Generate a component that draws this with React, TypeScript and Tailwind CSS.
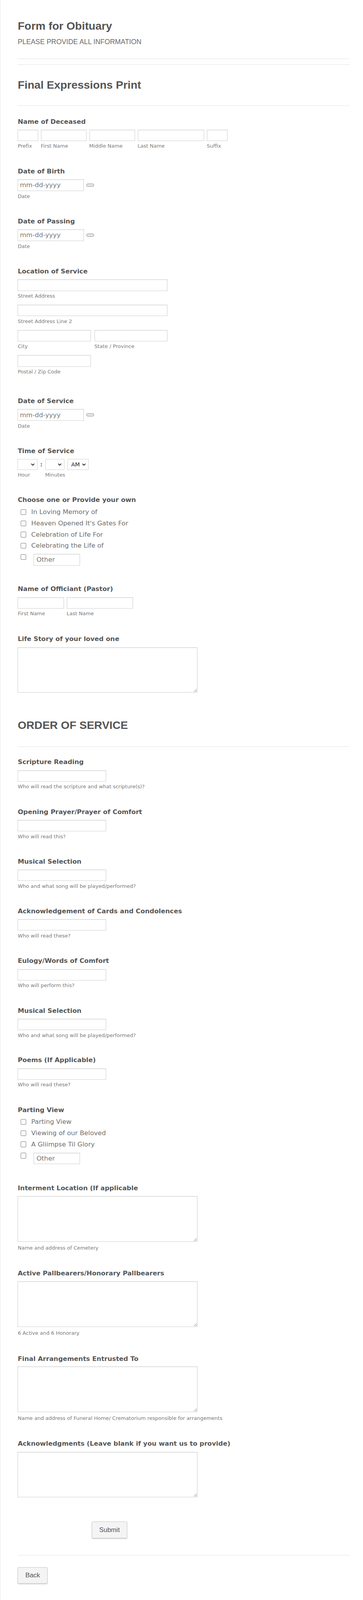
import type { ReactNode } from 'react';

const HEAD = "font-['Liberation_Sans',Arial,sans-serif] font-bold text-[28.44px] leading-[33.78px] text-[#555]";
const LABEL = "font-['DejaVu_Sans',Verdana,sans-serif] font-bold text-[16.6px] leading-[19.56px] text-[#555]";
const SUB = "font-['DejaVu_Sans',Verdana,sans-serif] text-[13px] leading-[16px] text-[#7b7b7b] whitespace-nowrap";
const FIELD = "block h-[29.33px] border border-[#cfcfcf] bg-white shadow-[inset_0_1px_2px_rgba(0,0,0,0.08)] outline-none";
const AREA = "block border border-[#cfcfcf] bg-white shadow-[inset_0_1px_2px_rgba(0,0,0,0.08)] outline-none";
const BTN =
  "block rounded-[3px] border border-[#c6c6c6] bg-[#f4f4f4] font-['Liberation_Sans',Arial,sans-serif] text-[16.9px] text-[#555] shadow-[0_2px_2px_rgba(0,0,0,0.15)]";

function Label({ children }: { children: ReactNode }) {
  return <div className={LABEL}>{children}</div>;
}

function Hr({ className }: { className: string }) {
  return <div className={`h-px bg-[#e2e2e2] ${className}`} />;
}

function DateField({ label, className }: { label: string; className: string }) {
  return (
    <div className={className}>
      <Label>{label}</Label>
      <div className="mt-[10.67px] flex items-center">
        <div className="flex h-[30.22px] w-[169.78px] items-center border border-[#cfcfcf] bg-white px-[4.44px] font-['DejaVu_Sans',Verdana,sans-serif] text-[16.6px] leading-[19.56px] text-[#777] shadow-[inset_0_1px_2px_rgba(0,0,0,0.08)]">
          mm-dd-yyyy
        </div>
        <span className="ml-[6.22px] h-[8px] w-[19.56px] rounded-full border border-[#8a8a8a] bg-[#e6e6e6]" />
      </div>
      <div className={`${SUB} mt-[5.33px]`}>Date</div>
    </div>
  );
}

function TextField({ label, sub, className }: { label: string; sub: string; className: string }) {
  return (
    <div className={className}>
      <Label>{label}</Label>
      <input className={`${FIELD} mt-[10.67px] w-[226.67px]`} />
      <div className={`${SUB} mt-[5.33px]`}>{sub}</div>
    </div>
  );
}

function Chevron() {
  return (
    <svg width="10" height="6.4" viewBox="0 0 11 7" className="shrink-0">
      <path d="M1.2 1.2 L5.5 5.4 L9.8 1.2" fill="none" stroke="#222" strokeWidth="2.2" />
    </svg>
  );
}

function Check() {
  return <span className="block h-[14.22px] w-[14.22px] shrink-0 rounded-[2px] border border-[#777] bg-white" />;
}

function Options({ items }: { items: string[] }) {
  return (
    <div className="pl-[7.11px]">
      {items.map((t) => (
        <div key={t} className="flex h-[28.71px] items-center">
          <Check />
          <span className="ml-[13.33px] font-['DejaVu_Sans',Verdana,sans-serif] text-[16.6px] leading-[19.56px] text-[#707070]">
            {t}
          </span>
        </div>
      ))}
      <div className="flex items-start">
        <span className="mt-[7.38px]">
          <Check />
        </span>
        <div className="ml-[19.56px] mt-[6.76px] flex h-[29.33px] w-[119.11px] items-center border border-[#cfcfcf] bg-white px-[6.22px] font-['DejaVu_Sans',Verdana,sans-serif] text-[16.6px] leading-[19.56px] text-[#777] shadow-[inset_0_1px_2px_rgba(0,0,0,0.08)]">
          Other
        </div>
      </div>
    </div>
  );
}

function AreaField({
  label,
  sub,
  className,
  areaClass,
}: {
  label: string;
  sub?: string;
  className: string;
  areaClass: string;
}) {
  return (
    <div className={className}>
      <Label>{label}</Label>
      <textarea className={`${AREA} w-[460.44px] ${areaClass}`} />
      {sub && <div className={`${SUB} mt-[8.3px]`}>{sub}</div>}
    </div>
  );
}

export default function App() {
  return (
    <div className="min-h-screen border-l border-[#e3e3e3] bg-white">
      <div className="pb-[24px] pl-[44.44px] pr-[34.67px] pt-[49.78px]">
        {/* header */}
        <h1 className={HEAD}>Form for Obituary</h1>
        <div className="mt-[13.33px] font-['Liberation_Sans',Arial,sans-serif] text-[17.78px] leading-[21.33px] text-[#6a6a6a]">
          PLEASE PROVIDE ALL INFORMATION
        </div>
        <Hr className="mt-[32px]" />
        <Hr className="mt-[14.22px]" />
        <h2 className={`${HEAD} mt-[34.67px]`}>Final Expressions Print</h2>
        <Hr className="mt-[35px]" />

        {/* Name of Deceased */}
        <div className="mt-[30.67px]">
          <Label>Name of Deceased</Label>
          <div className="mt-[10.67px] flex gap-[6.67px]">
            {[
              ['Prefix', 'w-[52.44px]'],
              ['First Name', 'w-[117.33px]'],
              ['Middle Name', 'w-[117.33px]'],
              ['Last Name', 'w-[170.67px]'],
              ['Suffix', 'w-[53.33px]'],
            ].map(([s, w]) => (
              <div key={s} className={w}>
                <input className={`${FIELD} w-full`} />
                <div className={`${SUB} mt-[5.33px]`}>{s}</div>
              </div>
            ))}
          </div>
        </div>

        <DateField label="Date of Birth" className="mt-[46.49px]" />
        <DateField label="Date of Passing" className="mt-[46.22px]" />

        {/* Location of Service */}
        <div className="mt-[46.58px]">
          <Label>Location of Service</Label>
          <div className="mt-[10.67px] w-[384px]">
            <input className={`${FIELD} w-full`} />
            <div className={`${SUB} mt-[5.33px]`}>Street Address</div>
            <input className={`${FIELD} mt-[13.96px] w-full`} />
            <div className={`${SUB} mt-[5.33px]`}>Street Address Line 2</div>
            <div className="mt-[13.96px] flex gap-[8.89px]">
              <div className="w-[187.56px]">
                <input className={`${FIELD} w-full`} />
                <div className={`${SUB} mt-[5.33px]`}>City</div>
              </div>
              <div className="w-[187.56px]">
                <input className={`${FIELD} w-full`} />
                <div className={`${SUB} mt-[5.33px]`}>State / Province</div>
              </div>
            </div>
            <div className="mt-[13.96px] w-[187.56px]">
              <input className={`${FIELD} w-full`} />
              <div className={`${SUB} mt-[5.33px]`}>Postal / Zip Code</div>
            </div>
          </div>
        </div>

        <DateField label="Date of Service" className="mt-[57.07px]" />

        {/* Time of Service */}
        <div className="mt-[46.49px]">
          <Label>Time of Service</Label>
          <div className="mt-[10.67px] flex h-[27.56px] items-center">
            <div className="flex h-[27.56px] w-[50.67px] items-center justify-end border border-[#cfcfcf] bg-white pr-[6.22px]">
              <Chevron />
            </div>
            <span className="w-[19.56px] text-center font-['DejaVu_Sans',Verdana,sans-serif] text-[14.22px] leading-[18px] font-bold text-[#666]">:</span>
            <div className="flex h-[27.56px] w-[49.78px] items-center justify-end border border-[#cfcfcf] bg-white pr-[6.22px]">
              <Chevron />
            </div>
            <div className="ml-[8px] flex h-[27.56px] w-[53.33px] items-center justify-between border border-[#cfcfcf] bg-white pl-[8px] pr-[5.33px]">
              <span className="font-['DejaVu_Sans',Verdana,sans-serif] text-[14.22px] leading-[18px] text-[#222]">AM</span>
              <Chevron />
            </div>
          </div>
          <div className="mt-[5.33px] flex">
            <div className={`${SUB} w-[70.22px]`}>Hour</div>
            <div className={SUB}>Minutes</div>
          </div>
        </div>

        {/* Choose one */}
        <div className="mt-[45.96px]">
          <Label>Choose one or Provide your own</Label>
          <div className="mt-[6.84px]">
            <Options items={['In Loving Memory of', "Heaven Opened It's Gates For", 'Celebration of Life For', 'Celebrating the Life of']} />
          </div>
        </div>

        {/* Officiant */}
        <div className="mt-[50.84px]">
          <Label>Name of Officiant (Pastor)</Label>
          <div className="mt-[10.67px] flex gap-[7.11px]">
            <div className="w-[118.22px]">
              <input className={`${FIELD} w-full`} />
              <div className={`${SUB} mt-[5.33px]`}>First Name</div>
            </div>
            <div className="w-[170.67px]">
              <input className={`${FIELD} w-full`} />
              <div className={`${SUB} mt-[5.33px]`}>Last Name</div>
            </div>
          </div>
        </div>

        <AreaField label="Life Story of your loved one" className="mt-[47.11px]" areaClass="mt-[10.67px] h-[116.8px]" />

        <h2 className={`${HEAD} mt-[67.11px]`}>ORDER OF SERVICE</h2>
        <Hr className="mt-[36.36px]" />

        <TextField label="Scripture Reading" sub="Who will read the scripture and what scripture(s)?" className="mt-[29.78px]" />
        <TextField label="Opening Prayer/Prayer of Comfort" sub="Who will read this?" className="mt-[46.49px]" />
        <TextField label="Musical Selection" sub="Who and what song will be played/performed?" className="mt-[46.22px]" />
        <TextField label="Acknowledgement of Cards and Condolences" sub="Who will read these?" className="mt-[46.22px]" />
        <TextField label="Eulogy/Words of Comfort" sub="Who will perform this?" className="mt-[46.49px]" />
        <TextField label="Musical Selection" sub="Who and what song will be played/performed?" className="mt-[46.49px]" />
        <TextField label="Poems (If Applicable)" sub="Who will read these?" className="mt-[45.96px]" />

        {/* Parting View */}
        <div className="mt-[46.49px]">
          <Label>Parting View</Label>
          <div className="mt-[6.4px]">
            <Options items={['Parting View', 'Viewing of our Beloved', 'A Gliimpse Til Glory']} />
          </div>
        </div>

        <AreaField
          label="Interment Location (If applicable"
          sub="Name and address of Cemetery"
          className="mt-[51.73px]"
          areaClass="mt-[10.49px] h-[117.07px]"
        />
        <AreaField
          label="Active Pallbearers/Honorary Pallbearers"
          sub="6 Active and 6 Honorary"
          className="mt-[47.02px]"
          areaClass="mt-[10.22px] h-[117.07px]"
        />
        <AreaField
          label="Final Arrangements Entrusted To"
          sub="Name and address of Funeral Home/ Crematorium responsible for arrangements"
          className="mt-[47.64px]"
          areaClass="mt-[9.87px] h-[116.7px]"
        />
        <AreaField
          label="Acknowledgments (Leave blank if you want us to provide)"
          className="mt-[47.2px]"
          areaClass="mt-[10.76px] h-[116px]"
        />

        {/* buttons */}
        <button className={`${BTN} ml-[189.33px] mt-[62.5px] h-[42.67px] w-[91.56px]`}>Submit</button>
        <Hr className="mt-[43.2px]" />
        <button className={`${BTN} mt-[29.96px] h-[42.04px] w-[76.44px]`}>Back</button>
      </div>
    </div>
  );
}
